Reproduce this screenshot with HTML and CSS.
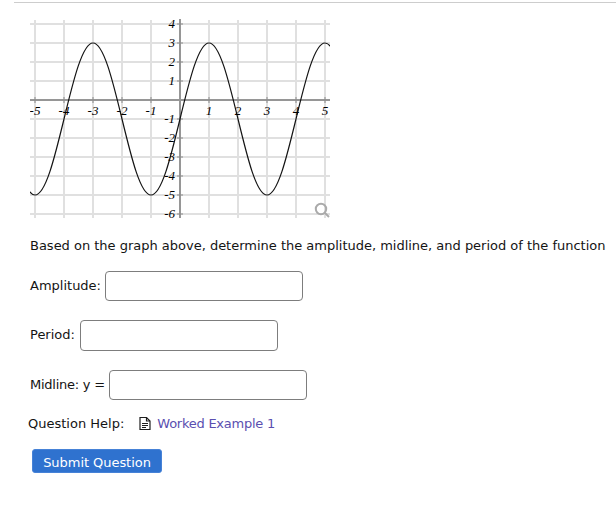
FILE: index.html
```html
<!DOCTYPE html>
<html lang="en">
<head>
    <meta charset="UTF-8">
    <title>Question</title>
    <link rel="stylesheet" href="styles.css">
</head>
<body>
    <div class="topline"></div>
    <div class="question">
        <svg class="graph" width="300" height="210" viewBox="0 -10 300 210">
            <g class="grid">
                <path d="M5 0V198M34 0V198M63 0V198M92 0V198M121 0V198M179 0V198M208 0V198M237 0V198M266 0V198M295 0V198"/>
                <path d="M0 4H300M0 23H300M0 42H300M0 61H300M0 99H300M0 118H300M0 137H300M0 156H300M0 175H300M0 194H300"/>
            </g>
            <path class="axis" d="M0 80H300M150 -1V198"/>
            <path class="ticks" d="M147 4H153M147 23H153M147 42H153M147 61H153M147 99H153M147 118H153M147 137H153M147 156H153M147 175H153M147 194H153M5 77V83M34 77V83M63 77V83M92 77V83M121 77V83M179 77V83M208 77V83M237 77V83M266 77V83M295 77V83"/>
            <path class="curve" d="M-24 99c9.458 38.93 18.505 76 29 76c10.495 0 19.542 -37.07 29 -76c9.458 -38.93 18.505 -76 29 -76c10.495 0 19.542 37.07 29 76c9.458 38.93 18.505 76 29 76c10.495 0 19.542 -37.07 29 -76c9.458 -38.93 18.505 -76 29 -76c10.495 0 19.542 37.07 29 76c9.458 38.93 18.505 76 29 76c10.495 0 19.542 -37.07 29 -76c9.458 -38.93 18.505 -76 29 -76c10.495 0 19.542 37.07 29 76"/>
            <g class="xlabels">
                <text x="5" y="95">-5</text>
                <text x="34" y="95">-4</text>
                <text x="63" y="95">-3</text>
                <text x="92" y="95">-2</text>
                <text x="121" y="95">-1</text>
                <text x="179" y="95">1</text>
                <text x="208" y="95">2</text>
                <text x="237" y="95">3</text>
                <text x="266" y="95">4</text>
                <text x="295" y="95">5</text>
            </g>
            <g class="ylabels">
                <text x="145" y="8">4</text>
                <text x="145" y="27">3</text>
                <text x="145" y="46">2</text>
                <text x="145" y="65">1</text>
                <text x="145" y="103">-1</text>
                <text x="145" y="122">-2</text>
                <text x="145" y="141">-3</text>
                <text x="145" y="160">-4</text>
                <text x="145" y="179">-5</text>
                <text x="145" y="198">-6</text>
            </g>
            <g class="zoomicon">
                <circle cx="291" cy="189" r="5.2"/>
                <path d="M295 193L299 197"/>
            </g>
        </svg>

        <p class="prompt">Based on the graph above, determine the amplitude, midline, and period of the function</p>

        <div class="answer answer-amp"><label>Amplitude:</label><input type="text" class="answer-box"></div>
        <div class="answer answer-per"><label>Period:</label><input type="text" class="answer-box"></div>
        <div class="answer answer-mid"><label>Midline: y =</label><input type="text" class="answer-box"></div>

        <div class="help">
            <span>Question Help:</span>
            <svg class="help-icon" width="12" height="15" viewBox="0 0 12 15">
                <path d="M1 1.5H7.5L11 5V13.5H1Z"/>
                <path d="M7.5 1.5V5H11M3 7.5H9M3 9.5H9M3 11.5H7"/>
            </svg>
            <a href="#" class="help-link">Worked Example 1</a>
        </div>

        <button class="submit">Submit Question</button>
    </div>
</body>
</html>
```

FILE: styles.css
```css
body,html{
    margin: 0;
    background-color: white;
    font-family: "DejaVu Sans", sans-serif;
    font-size: 13px;
    color: rgb(20, 20, 20);
}
.topline{
    height: 1px;
    margin: 2px 0 0 14px;
    background-color: rgb(205, 205, 205);
}
.question{
    padding-left: 30px;
}
.graph{
    display: block;
    margin-top: 7px;
}
.grid path{
    fill: none;
    stroke: rgb(224, 224, 224);
    stroke-width: 2;
}
.axis{
    fill: none;
    stroke: rgb(150, 150, 150);
    stroke-width: 2;
}
.ticks{
    fill: none;
    stroke: rgb(140, 140, 140);
    stroke-width: 1;
}
.curve{
    fill: none;
    stroke: rgb(20, 20, 20);
    stroke-width: 1.2;
}
.xlabels text,.ylabels text{
    font-family: "Liberation Serif", serif;
    font-style: italic;
    font-size: 13px;
    fill: black;
}
.xlabels text{
    text-anchor: middle;
}
.ylabels text{
    text-anchor: end;
}
.zoomicon{
    fill: none;
    stroke: rgb(170, 170, 170);
    stroke-width: 2;
}
.prompt{
    margin: 16px 0 0 0;
    height: 20px;
    line-height: 20px;
    white-space: nowrap;
    letter-spacing: -0.01px;
}
.answer{
    display: flex;
    align-items: center;
    gap: 4px;
}
.answer label{
    padding-bottom: 2px;
}
.answer-amp{
    margin-top: 15px;
}
.answer-per{
    margin-top: 19px;
    gap: 5px;
}
.answer-mid{
    margin-top: 19px;
    gap: 4px;
    letter-spacing: -0.25px;
}
.answer-box{
    box-sizing: border-box;
    width: 198px;
    height: 30px;
    margin: 0;
    border: 1px solid rgb(125, 125, 125);
    border-radius: 4px;
    background-color: white;
}
.answer-per .answer-box{
    height: 31px;
}
.help{
    display: flex;
    align-items: center;
    height: 20px;
    margin: 13px 0 0 -2px;
}
.help-icon{
    margin-left: 15px;
    margin-right: 6px;
}
.help-icon path{
    fill: none;
    stroke: rgb(30, 30, 30);
    stroke-width: 1.2;
}
.help-link{
    color: rgb(90, 79, 176);
    text-decoration: none;
    letter-spacing: -0.25px;
}
.submit{
    display: block;
    box-sizing: border-box;
    width: 130px;
    height: 24px;
    margin: 16px 0 0 2px;
    padding: 2px 0 0 0;
    border: 1px solid rgb(70, 130, 215);
    border-radius: 3px;
    background-color: rgb(47, 114, 207);
    color: white;
    font-family: "DejaVu Sans", sans-serif;
    font-size: 13px;
    letter-spacing: -0.05px;
}
```
